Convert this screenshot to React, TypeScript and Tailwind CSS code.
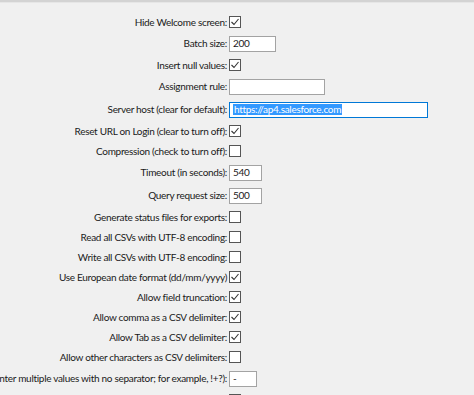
type Row =
  | { label: string; kind: "check"; checked: boolean }
  | { label: string; kind: "input"; value: string; width: string; focused?: boolean }

const rows: Row[] = [
  { label: "Hide Welcome screen:", kind: "check", checked: true },
  { label: "Batch size:", kind: "input", value: "200", width: "w-[47px]" },
  { label: "Insert null values:", kind: "check", checked: true },
  { label: "Assignment rule:", kind: "input", value: "", width: "w-[96px]" },
  { label: "Server host (clear for default):", kind: "input", value: "https://ap4.salesforce.com", width: "w-[199px]", focused: true },
  { label: "Reset URL on Login (clear to turn off):", kind: "check", checked: true },
  { label: "Compression (check to turn off):", kind: "check", checked: false },
  { label: "Timeout (in seconds):", kind: "input", value: "540", width: "w-[33px]" },
  { label: "Query request size:", kind: "input", value: "500", width: "w-[33px]" },
  { label: "Generate status files for exports:", kind: "check", checked: false },
  { label: "Read all CSVs with UTF-8 encoding:", kind: "check", checked: false },
  { label: "Write all CSVs with UTF-8 encoding:", kind: "check", checked: false },
  { label: "Use European date format (dd/mm/yyyy)", kind: "check", checked: true },
  { label: "Allow field truncation:", kind: "check", checked: true },
  { label: "Allow comma as a CSV delimiter:", kind: "check", checked: true },
  { label: "Allow Tab as a CSV delimiter:", kind: "check", checked: true },
  { label: "Allow other characters as CSV delimiters:", kind: "check", checked: false },
  { label: "Enter multiple values with no separator; for example, !+?):", kind: "input", value: "-", width: "w-[28px]" },
  { label: "", kind: "check", checked: true },
]

function CheckBox({ checked }: { checked: boolean }) {
  return (
    <div className="w-[12px] h-[12px] border border-[#555] bg-white flex items-center justify-center">
      {checked && (
        <svg width="10" height="10" viewBox="0 0 10 10">
          <polyline points="1.5,5 4,7.5 8.5,2" fill="none" stroke="#333" strokeWidth="1.1" />
        </svg>
      )}
    </div>
  )
}

export default function App() {
  return (
    <div
      className="w-[474px] h-[395px] overflow-hidden bg-[#f0f0f0] text-[#1a1a1a] text-[10px] tracking-[-0.3px]"
      style={{ fontFamily: 'Lato, "Noto Sans", sans-serif' }}
    >
      <div className="h-[2px] bg-[#d3d3d3]" />
      <div className="h-[1px] bg-[#e6e6e6]" />
      <div className="pt-[9px] flex flex-col">
        {rows.map((row, i) => (
          <div key={i} className={`flex items-center ${row.kind === "input" ? "h-[23px]" : "h-[20px]"}`}>
            <div className="w-[229px] shrink-0 flex justify-end whitespace-nowrap pr-[2px]">{row.label}</div>
            {row.kind === "check" ? (
              <CheckBox checked={row.checked} />
            ) : (
              <div
                className={`${row.width} h-[16px] bg-white border flex items-center px-[3px] ${
                  row.focused ? "border-[#0078d7]" : "border-[#a3a3a3]"
                }`}
              >
                {row.focused ? (
                  <span className="bg-[#3399ff] text-white leading-[11px] px-[1px]">{row.value}</span>
                ) : (
                  <span>{row.value}</span>
                )}
              </div>
            )}
          </div>
        ))}
      </div>
    </div>
  )
}
